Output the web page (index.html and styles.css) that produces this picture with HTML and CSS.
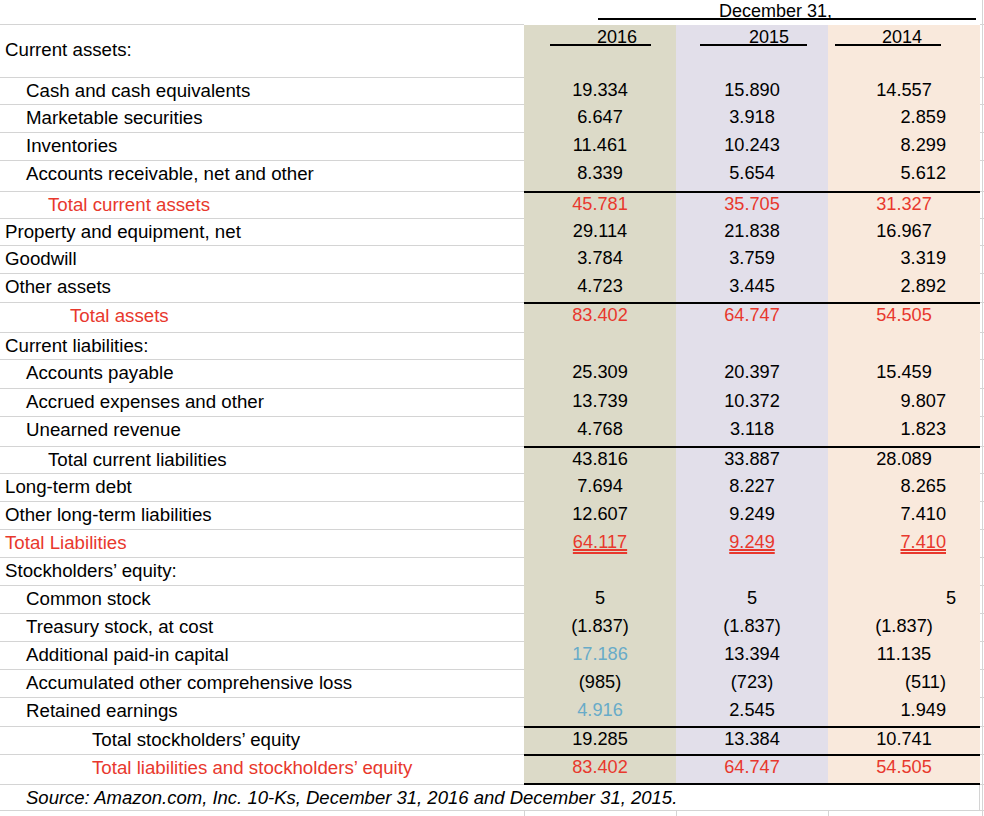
FILE: index.html
```html
<!DOCTYPE html>
<html>
<head>
<meta charset="utf-8">
<link rel="stylesheet" href="styles.css">
</head>
<body>
<div class="sheet">
  <div class="row r25">
    <div class="lab"></div>
    <div class="dechead"><div class="dec">December 31,</div></div>
    <div class="edge"></div>
  </div>
  <div class="row r53">
    <div class="lab l0 first">Current assets:</div>
    <div class="num c16"><span class="yr y16">2016</span></div>
    <div class="num c15"><span class="yr y15">2015</span></div>
    <div class="num c14"><span class="yr y14">2014</span></div>
    <div class="edge"></div>
  </div>
  <div class="row r27">
    <div class="lab l1">Cash and cash equivalents</div>
    <div class="num c16">19.334</div><div class="num c15">15.890</div><div class="num c14">14.557</div><div class="edge"></div>
  </div>
  <div class="row r28">
    <div class="lab l1">Marketable securities</div>
    <div class="num c16">6.647</div><div class="num c15">3.918</div><div class="num c14 rt">2.859</div><div class="edge"></div>
  </div>
  <div class="row r28">
    <div class="lab l1">Inventories</div>
    <div class="num c16">11.461</div><div class="num c15">10.243</div><div class="num c14 rt">8.299</div><div class="edge"></div>
  </div>
  <div class="row r31">
    <div class="lab l1">Accounts receivable, net and other</div>
    <div class="num c16">8.339</div><div class="num c15">5.654</div><div class="num c14 rt">5.612</div><div class="edge"></div>
  </div>
  <div class="row r27 bt red">
    <div class="lab l2">Total current assets</div>
    <div class="num c16">45.781</div><div class="num c15">35.705</div><div class="num c14">31.327</div><div class="edge"></div>
  </div>
  <div class="row r27">
    <div class="lab l0">Property and equipment, net</div>
    <div class="num c16">29.114</div><div class="num c15">21.838</div><div class="num c14">16.967</div><div class="edge"></div>
  </div>
  <div class="row r28">
    <div class="lab l0">Goodwill</div>
    <div class="num c16">3.784</div><div class="num c15">3.759</div><div class="num c14 rt">3.319</div><div class="edge"></div>
  </div>
  <div class="row r29">
    <div class="lab l0">Other assets</div>
    <div class="num c16">4.723</div><div class="num c15">3.445</div><div class="num c14 rt">2.892</div><div class="edge"></div>
  </div>
  <div class="row r30 bt red">
    <div class="lab l3">Total assets</div>
    <div class="num c16">83.402</div><div class="num c15">64.747</div><div class="num c14">54.505</div><div class="edge"></div>
  </div>
  <div class="row r27">
    <div class="lab l0">Current liabilities:</div>
    <div class="num c16"></div><div class="num c15"></div><div class="num c14"></div><div class="edge"></div>
  </div>
  <div class="row r29">
    <div class="lab l1">Accounts payable</div>
    <div class="num c16">25.309</div><div class="num c15">20.397</div><div class="num c14">15.459</div><div class="edge"></div>
  </div>
  <div class="row r28">
    <div class="lab l1">Accrued expenses and other</div>
    <div class="num c16">13.739</div><div class="num c15">10.372</div><div class="num c14 rt">9.807</div><div class="edge"></div>
  </div>
  <div class="row r30">
    <div class="lab l1">Unearned revenue</div>
    <div class="num c16">4.768</div><div class="num c15">3.118</div><div class="num c14 rt">1.823</div><div class="edge"></div>
  </div>
  <div class="row r27 bt">
    <div class="lab l2">Total current liabilities</div>
    <div class="num c16">43.816</div><div class="num c15">33.887</div><div class="num c14">28.089</div><div class="edge"></div>
  </div>
  <div class="row r28">
    <div class="lab l0">Long-term debt</div>
    <div class="num c16">7.694</div><div class="num c15">8.227</div><div class="num c14 rt">8.265</div><div class="edge"></div>
  </div>
  <div class="row r28">
    <div class="lab l0">Other long-term liabilities</div>
    <div class="num c16">12.607</div><div class="num c15">9.249</div><div class="num c14 rt">7.410</div><div class="edge"></div>
  </div>
  <div class="row r28 red">
    <div class="lab l0">Total Liabilities</div>
    <div class="num c16"><span class="dbl">64.117</span></div><div class="num c15"><span class="dbl">9.249</span></div><div class="num c14 rt"><span class="dbl">7.410</span></div><div class="edge"></div>
  </div>
  <div class="row r28">
    <div class="lab l0">Stockholders’ equity:</div>
    <div class="num c16"></div><div class="num c15"></div><div class="num c14"></div><div class="edge"></div>
  </div>
  <div class="row r28">
    <div class="lab l1">Common stock</div>
    <div class="num c16">5</div><div class="num c15">5</div><div class="num c14 rt5">5</div><div class="edge"></div>
  </div>
  <div class="row r28">
    <div class="lab l1">Treasury stock, at cost</div>
    <div class="num c16">(1.837)</div><div class="num c15">(1.837)</div><div class="num c14">(1.837)</div><div class="edge"></div>
  </div>
  <div class="row r28">
    <div class="lab l1">Additional paid-in capital</div>
    <div class="num c16 blue">17.186</div><div class="num c15">13.394</div><div class="num c14">11.135</div><div class="edge"></div>
  </div>
  <div class="row r28">
    <div class="lab l1">Accumulated other comprehensive loss</div>
    <div class="num c16">(985)</div><div class="num c15">(723)</div><div class="num c14 rt">(511)</div><div class="edge"></div>
  </div>
  <div class="row r29">
    <div class="lab l1">Retained earnings</div>
    <div class="num c16 blue">4.916</div><div class="num c15">2.545</div><div class="num c14 rt">1.949</div><div class="edge"></div>
  </div>
  <div class="row r28 bt">
    <div class="lab l4">Total stockholders’ equity</div>
    <div class="num c16">19.285</div><div class="num c15">13.384</div><div class="num c14">10.741</div><div class="edge"></div>
  </div>
  <div class="row r30 bt bb red">
    <div class="lab l4">Total liabilities and stockholders’ equity</div>
    <div class="num c16">83.402</div><div class="num c15">64.747</div><div class="num c14">54.505</div><div class="edge"></div>
  </div>
  <div class="row r26">
    <div class="lab l1 source">Source: Amazon.com, Inc. 10-Ks, December 31, 2016 and December 31, 2015.</div>
    <div class="edge"></div>
  </div>
  <div class="row r6">
    <div class="blank"></div>
    <div class="blank vl"></div>
    <div class="blank vl"></div>
    <div class="blank vl"></div>
    <div class="edge noline"></div>
  </div>
</div>
</body>
</html>
```
FILE: styles.css
```css
html, body {
  margin: 0;
  padding: 0;
  background: #ffffff;
}

body {
  font-family: "Liberation Sans", Arial, sans-serif;
  color: #000000;
  width: 984px;
  height: 816px;
  overflow: hidden;
}

.sheet {
  width: 984px;
}

.row {
  display: grid;
  grid-template-columns: 524px 152px 152px 152px 4px;
  box-sizing: border-box;
}

.r6 { height: 6px; }
.r25 { height: 25px; }
.r26 { height: 26px; }
.r27 { height: 27px; }
.r28 { height: 28px; }
.r29 { height: 29px; }
.r30 { height: 30px; }
.r31 { height: 31px; }
.r53 { height: 53px; }

.lab {
  box-sizing: border-box;
  border-bottom: 1px solid #d4d4d4;
  font-size: 18.7px;
  line-height: 21px;
  padding-top: 2px;
  white-space: nowrap;
}

.l0 { padding-left: 5px; }
.l1 { padding-left: 26px; }
.l2 { padding-left: 48px; }
.l3 { padding-left: 70px; }
.l4 { padding-left: 92px; }

.first { padding-top: 14px; }

.num {
  box-sizing: border-box;
  font-size: 18.2px;
  line-height: 21px;
  padding-top: 2px;
  text-align: center;
  white-space: nowrap;
}

.c16 { background: #dcdac8; }
.c15 { background: #e2dfea; }
.c14 { background: #f9e9dc; }

.rt { text-align: right; padding-right: 34px; }
.rt5 { text-align: right; padding-right: 24px; }

.red { color: #e8382d; }
.red .lab { color: #e8382d; }
.blue { color: #68abc8; }

.bt .num {
  box-shadow: inset 0 1px 0 #000000, 0 -1px 0 #000000;
}

.bb .num {
  box-shadow: inset 0 1px 0 #000000, 0 -1px 0 #000000, inset 0 -2px 0 #000000;
}

.dbl {
  text-decoration: underline double #e8382d;
  text-decoration-thickness: 1.5px;
  text-underline-offset: 1px;
}

.edge {
  box-sizing: border-box;
  border-bottom: 1px solid #d4d4d4;
  background: linear-gradient(to right, transparent 2px, #d4d4d4 2px, #d4d4d4 3px, transparent 3px);
}

.noline { border-bottom: none; }

.dechead {
  grid-column: 2 / 5;
}

.dec {
  margin-left: 74px;
  width: 378px;
  box-sizing: border-box;
  padding-top: 4px;
  padding-left: 121px;
  font-size: 18px;
  line-height: 14px;
  border-bottom: 2px solid #000000;
  white-space: nowrap;
}

.yr {
  display: inline-block;
  box-sizing: border-box;
  margin-top: 6px;
  line-height: 13px;
  font-size: 18px;
  text-align: right;
  border-bottom: 2px solid #000000;
}

.num:has(.yr) { text-align: left; padding-top: 0; }

.y16 { margin-left: 26px; width: 101px; padding-right: 14px; }
.y15 { margin-left: 24px; width: 107px; padding-right: 18px; }
.y14 { margin-left: 7px; width: 106px; padding-right: 19px; }

.source {
  grid-column: 1 / 5;
  font-style: italic;
  font-size: 18.5px;
  border-right: 1px solid #d4d4d4;
}

.blank { box-sizing: border-box; }
.vl { border-left: 1px solid #d4d4d4; }
```
